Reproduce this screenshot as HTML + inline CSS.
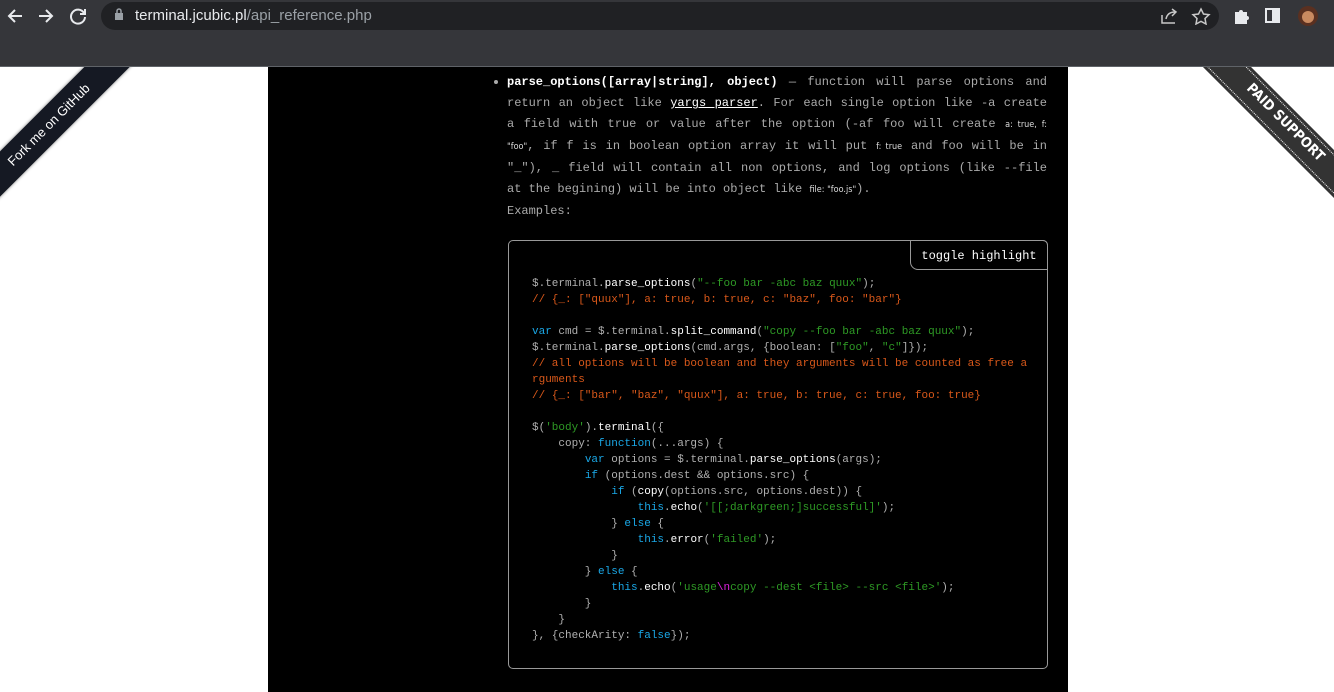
<!DOCTYPE html>
<html><head><meta charset="utf-8"><style>
*{margin:0;padding:0;box-sizing:border-box}
body{width:1334px;height:692px;overflow:hidden;background:#fff;font-family:"Liberation Sans",sans-serif;position:relative}
.top{position:absolute;left:0;top:0;width:1334px;height:67px;background:#35363a;border-bottom:1px solid #5f6368;z-index:5}
.addr{position:absolute;left:101px;top:2px;width:1118px;height:28px;border-radius:14px;background:#202124}
.url{position:absolute;left:135px;top:7px;font-size:15px;color:#e8eaed}
.url span{color:#9aa0a6}
.col{position:absolute;left:268px;top:67px;width:800px;height:625px;background:#000}
.para{position:absolute;left:507px;top:72px;width:540px;font-family:"Liberation Mono",monospace;font-size:12px;line-height:21px;color:#aaa}
.para div{text-align:justify;text-align-last:justify;white-space:nowrap}
.para div.l{text-align-last:left}
.para b{color:#fff}
.para u{color:#fff}
.para small{font-size:9px;font-family:"DejaVu Sans Condensed","Liberation Sans",sans-serif;color:#ddd}
.box{position:absolute;left:508px;top:240px;width:540px;height:429px;border:1px solid #999;border-radius:5px}
.tog{position:absolute;right:-1px;top:-1px;width:138px;height:30px;border:1px solid #999;border-radius:0 5px 0 8px;color:#fff;font-family:"Liberation Mono",monospace;font-size:12px;text-align:center;line-height:30px}
pre{position:absolute;left:532px;top:276px;font-family:"Liberation Mono",monospace;font-size:11px;line-height:16px;color:#b0b0b0}
.f{color:#fff}.k{color:#1aa7e6}.s{color:#2e9a25}.c{color:#d9581a}.m{color:#e020e0}
.rw{position:absolute;left:0;top:67px;width:1334px;height:200px;overflow:hidden}
.rib{position:absolute;color:#fff;text-align:center}
</style></head><body>
<div class="top">
<svg style="position:absolute;left:7px;top:7px" width="80" height="18" viewBox="0 0 80 18" fill="none" stroke="#e8eaed" stroke-width="2"><path d="M15 9H2M8 3L2 9l6 6"/><path d="M32 9h13M39 3l6 6-6 6"/><path d="M77 6a7 7 0 1 0 1 4M78 2v5h-5"/></svg>
<div class="addr"></div>
<svg style="position:absolute;left:114px;top:8px" width="10" height="13"><rect x="1" y="5" width="8" height="7" fill="#9aa0a6"/><path d="M3 5V3a2 2 0 0 1 4 0v2" stroke="#9aa0a6" fill="none" stroke-width="1.5"/></svg>
<div class="url">terminal.jcubic.pl<span>/api_reference.php</span></div>
<svg style="position:absolute;left:1160px;top:7px" width="60" height="18" fill="none" stroke="#c8c8c8" stroke-width="1.5"><path d="M2 8v8h13M6 12c1-5 4-7 9-7M12 2l4 3-4 4"/><path d="M41 2l2.5 5 5.5.7-4 3.8 1 5.5-5-2.7-5 2.7 1-5.5-4-3.8 5.5-.7z"/></svg>
<svg style="position:absolute;left:1233px;top:6px" width="90" height="22"><path d="M2 6h4a2 2 0 1 1 4 0h4v4a2 2 0 1 1 0 4v4H2z" fill="#e8eaed"/><rect x="33" y="3" width="13" height="13" fill="none" stroke="#e8eaed" stroke-width="2"/><rect x="39" y="3" width="7" height="13" fill="#e8eaed"/><circle cx="75" cy="10" r="10" fill="#5a3020"/><circle cx="75" cy="11" r="6" fill="#c98a60"/></svg>
</div>
<div class="col"></div>
<div class="rw">
<div class="rib" style="left:-66px;top:42px;width:230px;height:32px;background:#151923;transform:rotate(-45deg);font-size:13px;line-height:32px;box-shadow:0 0 3px #777">Fork me on GitHub</div>
<div class="rib" style="left:1174px;top:43px;width:220px;height:28px;background:#333;transform:rotate(45deg);font-size:14px;line-height:22px;font-weight:bold;border-top:1px dotted #fff;border-bottom:1px dotted #fff;outline:3px solid #333;font-family:'DejaVu Sans Condensed','Liberation Sans',sans-serif">PAID SUPPORT</div>
</div>
<div style="position:absolute;left:494px;top:80px;width:4px;height:4px;border-radius:2px;background:#aaa"></div>
<div class="para">
<div><b>parse_options([array|string], object)</b> — function will parse options and</div>
<div>return an object like <u>yargs parser</u>. For each single option like -a create</div>
<div>a field with true or value after the option (-af foo will create <small>a: true, f:</small></div>
<div><small>"foo"</small>, if f is in boolean option array it will put <small>f: true</small> and foo will be in</div>
<div>"_"), _ field will contain all non options, and log options (like --file</div>
<div class="l">at the begining) will be into object like <small>file: "foo.js"</small>).</div>
<div class="l">Examples:</div>
</div>
<div class="box"><div class="tog">toggle highlight</div></div>
<pre>$.terminal.<span class="f">parse_options</span>(<span class="s">"--foo bar -abc baz quux"</span>);
<span class="c">// {_: ["quux"], a: true, b: true, c: "baz", foo: "bar"}</span>

<span class="k">var</span> cmd = $.terminal.<span class="f">split_command</span>(<span class="s">"copy --foo bar -abc baz quux"</span>);
$.terminal.<span class="f">parse_options</span>(cmd.args, {boolean: [<span class="s">"foo"</span>, <span class="s">"c"</span>]});
<span class="c">// all options will be boolean and they arguments will be counted as free a
rguments
// {_: ["bar", "baz", "quux"], a: true, b: true, c: true, foo: true}</span>

$(<span class="s">'body'</span>).<span class="f">terminal</span>({
    copy: <span class="k">function</span>(...args) {
        <span class="k">var</span> options = $.terminal.<span class="f">parse_options</span>(args);
        <span class="k">if</span> (options.dest &amp;&amp; options.src) {
            <span class="k">if</span> (<span class="f">copy</span>(options.src, options.dest)) {
                <span class="k">this</span>.<span class="f">echo</span>(<span class="s">'[[;darkgreen;]successful]'</span>);
            } <span class="k">else</span> {
                <span class="k">this</span>.<span class="f">error</span>(<span class="s">'failed'</span>);
            }
        } <span class="k">else</span> {
            <span class="k">this</span>.<span class="f">echo</span>(<span class="s">'usage<span class="m">\n</span>copy --dest &lt;file&gt; --src &lt;file&gt;'</span>);
        }
    }
}, {checkArity: <span class="k">false</span>});</pre>
</body></html>
